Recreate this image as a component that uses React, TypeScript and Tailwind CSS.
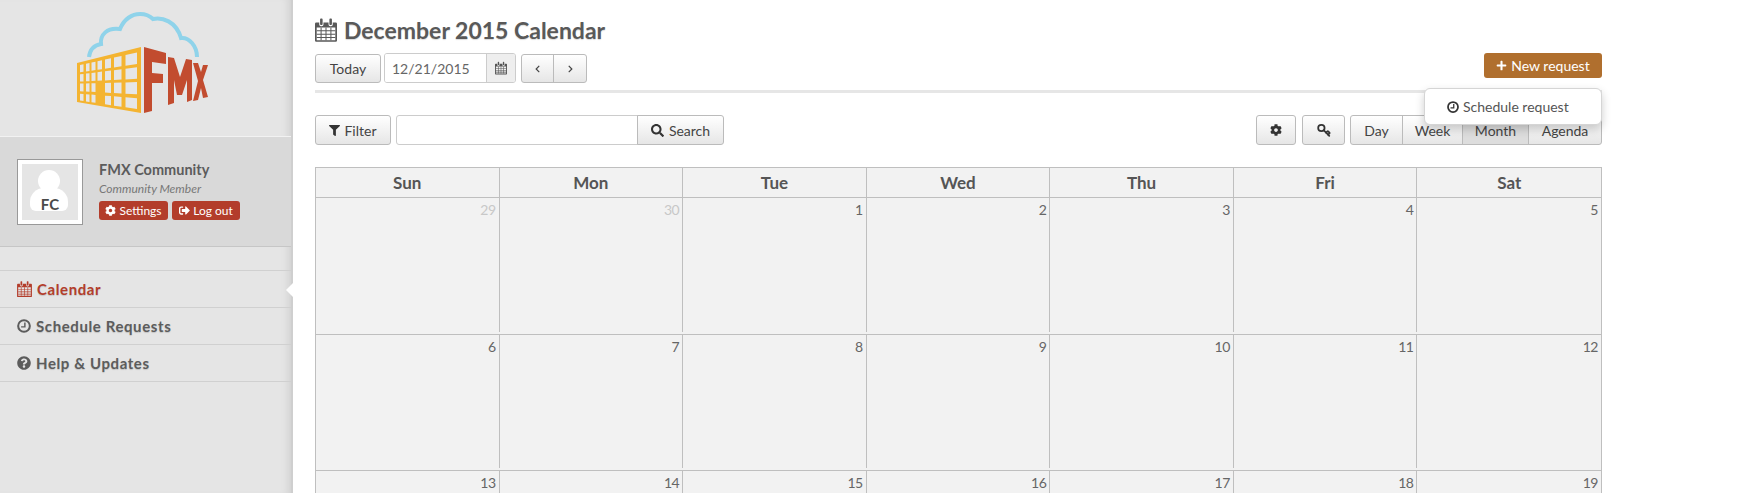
import React from 'react';
import { Key } from 'lucide-react';
import { FaCog, FaFilter, FaPlus, FaQuestionCircle, FaSearch, FaSignOutAlt, FaChevronLeft, FaChevronRight } from 'react-icons/fa';

const CalendarIcon: React.FC<{ className?: string }> = ({ className }) => (
  <svg viewBox="0 0 26 28" className={className} fill="currentColor">
    <path d="M1.5 5H5V7.5a2 2 0 0 0 2 2h1a2 2 0 0 0 2-2V5h6v2.5a2 2 0 0 0 2 2h1a2 2 0 0 0 2-2V5h3.5A1.5 1.5 0 0 1 26 6.500v20a1.500 1.500 0 0 1-1.500 1.500h-23A1.500 1.500 0 0 1 0 26.500v-20A1.500 1.500 0 0 1 1.500 5zM2 11v15h22V11H2z" fillRule="evenodd" />
    <path d="M6 1.500a1 1 0 0 1 1-1h1a1 1 0 0 1 1 1V7a1 1 0 0 1-1 1H7a1 1 0 0 1-1-1zM17 1.500a1 1 0 0 1 1-1h1a1 1 0 0 1 1 1V7a1 1 0 0 1-1 1h-1a1 1 0 0 1-1-1z" />
    <path d="M6.600 11h1.200v15H6.600zM12.400 11h1.200v15h-1.200zM18.200 11h1.200v15h-1.200zM2 14.300h22v1.200H2zM2 18.300h22v1.200H2zM2 22.300h22v1.200H2z" />
  </svg>
);

const ClockIcon: React.FC<{ className?: string }> = ({ className }) => (
  <svg viewBox="0 0 24 24" className={className} fill="none" stroke="currentColor">
    <circle cx="12" cy="12" r="10" strokeWidth="3.5" />
    <path d="M13.500 6v7.500H7" strokeWidth="2.500" />
  </svg>
);

// logo building windows, columns get wider towards the corner
const WIN_COLS = [[10, 13.5], [16, 19.5], [21.5, 25.5], [27.5, 32], [35, 41], [44, 51.5], [55.5, 67]];
const WIN_ROWS = [[0.07, 0.25], [0.3, 0.48], [0.53, 0.72], [0.78, 0.95]];
const topY = (x: number) => 58 - ((x - 7) / 64) * 16;
const botY = (x: number) => 97 + ((x - 7) / 64) * 11;
const yAt = (x: number, f: number) => topY(x) + (botY(x) - topY(x)) * f;

const Logo: React.FC = () => (
  <svg viewBox="0 0 150 115" className="w-[150px] h-[115px]">
    <path d="M19 52 C20 44 25 40 31 39 C30 30 37 22 50 24 C54 14 62 9 70 9 C76 9 80 11 83 14 C92 12 106 16 111 33 C119 32 127 41 127 52" fill="none" stroke="#8fd3ea" strokeWidth="4" />
    <path d="M7 58 L71 42 L71 108 L7 97Z" fill="#f4b431" />
    <g fill="#e6e6e6">
      {WIN_COLS.map(([a, b], c) =>
        WIN_ROWS.map(([f, g], r) =>
          c === 3 && r > 1 ? null : (
            <polygon key={`${c}-${r}`} points={`${a},${yAt(a, f)} ${b},${yAt(b, f)} ${b},${yAt(b, g)} ${a},${yAt(a, g)}`} />
          ),
        ),
      )}
    </g>
    <g fill="#c24c2f">
      <path d="M74 42 L96 48 L96 59 L82 57 L82 68 L93 69 L93 78 L82 78 L82 106 L74 108Z" />
      <path d="M98 52 L104 53 L110 72 L116 54 L122 55 L122 95 L117 97 L117 75 L112 90 L107 90 L104 75 L104 98 L98 100Z" />
      <path d="M123 58 L128 58 L131 67 L133 60 L138 60 L133 75 L138 92 L133 93 L131 83 L128 95 L123 96 L128 76Z" />
    </g>
  </svg>
);

const BTN = 'bg-gradient-to-b from-white to-[#e6e6e6] border border-[#bbbbbb] text-[#444] text-[14px]';

const DAYS = ['Sun', 'Mon', 'Tue', 'Wed', 'Thu', 'Fri', 'Sat'];
const WEEKS = [
  { h: 'h-[137px]', cells: [29, 30, 1, 2, 3, 4, 5] },
  { h: 'h-[136px]', cells: [6, 7, 8, 9, 10, 11, 12] },
  { h: 'h-[136px]', cells: [13, 14, 15, 16, 17, 18, 19] },
];

const NavItem: React.FC<{ icon: React.ReactNode; label: string; active?: boolean }> = ({ icon, label, active }) => (
  <div className={`relative h-[37px] flex items-center pl-[17px] gap-[5px] border-b border-[#d0d0d0] font-bold text-[15px] tracking-[0.6px] [text-shadow:0_1px_1px_rgba(0,0,0,0.15)] ${active ? 'text-[#b33d2b]' : 'text-[#5c5c5c]'}`}>
    {icon}
    {label}
    {active && <div className="absolute right-[-2px] top-[12px] w-0 h-0 border-y-[7px] border-y-transparent border-r-[7px] border-r-white" />}
  </div>
);

export default function App() {
  return (
    <div className="flex h-[493px] overflow-hidden bg-white font-['Lato','Liberation_Sans',sans-serif]">
      {/* Sidebar */}
      <aside className="w-[293px] shrink-0 bg-[#e5e5e5] border-r-[2px] border-[#cfcfcf] shadow-[inset_-8px_0_8px_-6px_rgba(0,0,0,0.1)] relative">
        <div className="h-[137px] flex justify-center pt-[5px] pr-[2px] border-b border-[#f2f2f2]">
          <Logo />
        </div>
        <div className="h-[110px] bg-[#d9d9d9] flex items-start pl-[18px] pt-[23px] border-b border-[#c6c6c6]">
          <div className="relative w-[64px] h-[64px] bg-[#e5e5e5] border-[4px] border-white outline-1 outline-[#999] overflow-hidden">
            <div className="absolute left-[16px] top-[6px] w-[22px] h-[22px] rounded-full bg-white" />
            <div className="absolute left-[8px] top-[24px] w-[38px] h-[23px] rounded-t-[14px] rounded-b-[6px] bg-white" />
            <div className="absolute inset-x-0 top-[29px] text-center text-[15px] font-bold text-[#4a4a4a]">FC</div>
          </div>
          <div className="ml-[17px] -mt-[1px]">
            <div className="text-[14.5px] font-bold text-[#5c5c5c] leading-[22px]">FMX Community</div>
            <div className="text-[12px] italic text-[#777] leading-[15px]">Community Member</div>
            <div className="flex gap-[4px] mt-[5px]">
              <div className="w-[69px] h-[19px] flex items-center justify-center gap-[3px] rounded-[3px] bg-[#b33d2b] text-white text-[12px]">
                <FaCog className="w-[11px] h-[11px]" /> Settings
              </div>
              <div className="w-[68px] h-[19px] flex items-center justify-center gap-[3px] rounded-[3px] bg-[#b33d2b] text-white text-[12px]">
                <FaSignOutAlt className="w-[11px] h-[11px]" /> Log out
              </div>
            </div>
          </div>
        </div>
        <div className="mt-[23px] border-t border-[#d0d0d0]">
          <NavItem active icon={<CalendarIcon className="w-[15px] h-[16px]" />} label="Calendar" />
          <NavItem icon={<ClockIcon className="w-[14px] h-[14px]" />} label="Schedule Requests" />
          <NavItem icon={<FaQuestionCircle className="w-[14px] h-[14px]" />} label="Help & Updates" />
        </div>
      </aside>

      {/* Main */}
      <main className="relative w-[1287px] ml-[22px] pt-[16px]">
        <h1 className="flex items-center gap-[7px] h-[28px] text-[23px] font-bold text-[#595959] leading-none [text-shadow:0_1px_1px_rgba(0,0,0,0.15)]">
          <CalendarIcon className="w-[22px] h-[24px]" />
          December 2015 Calendar
        </h1>
        <div className="flex items-start justify-between mt-[10px] h-[31px]">
          <div className="flex items-center h-[29px]">
            <div className={`${BTN} w-[66px] h-[29px] rounded-[3px] flex items-center justify-center`}>Today</div>
            <div className="flex ml-[3px] h-[30px] -mt-[1px] border border-[#cccccc] rounded-[3px] overflow-hidden">
              <div className="w-[101px] pl-[7px] flex items-center text-[14px] text-[#666] bg-white">12/21/2015</div>
              <div className="w-[29px] bg-[#eeeeee] border-l border-[#cccccc] flex items-center justify-center text-[#555]">
                <CalendarIcon className="w-[12px] h-[14px]" />
              </div>
            </div>
            <div className={`${BTN} flex ml-[5px] h-[29px] rounded-[3px] overflow-hidden`}>
              <div className="w-[32px] flex items-center justify-center border-r border-[#bbbbbb]"><FaChevronLeft className="w-[7px] h-[8px]" /></div>
              <div className="w-[32px] flex items-center justify-center"><FaChevronRight className="w-[7px] h-[8px]" /></div>
            </div>
          </div>
          <div className="-mt-[1px] w-[118px] h-[25px] rounded-[3px] bg-[#b06f2e] text-white text-[14px] flex items-center justify-center gap-[4px]">
            <FaPlus className="w-[11px] h-[11px]" /> New request
          </div>
        </div>
        <div className="h-[3px] bg-[#e6e6e6] mt-[5px]" />

        <div className="flex items-center justify-between mt-[22px]">
          <div className="flex items-center">
            <div className={`${BTN} w-[76px] h-[30px] rounded-[3px] flex items-center justify-center gap-[4px]`}>
              <FaFilter className="w-[11px] h-[11px] text-[#333]" /> Filter
            </div>
            <div className="ml-[5px] w-[242px] h-[30px] bg-white border border-[#cccccc] rounded-l-[3px]" />
            <div className={`${BTN} w-[87px] h-[30px] -ml-px rounded-r-[3px] flex items-center justify-center gap-[5px]`}>
              <FaSearch className="w-[13px] h-[13px] text-[#333]" /> Search
            </div>
          </div>
          <div className="flex items-center">
            <div className={`${BTN} w-[40px] h-[30px] rounded-[3px] flex items-center justify-center`}><FaCog className="w-[12px] h-[12px] text-[#333]" /></div>
            <div className={`${BTN} w-[43px] h-[30px] ml-[6px] rounded-[3px] flex items-center justify-center`}><Key strokeWidth={3} className="w-[14px] h-[14px] text-[#333] -scale-y-100" /></div>
            <div className={`${BTN} ml-[5px] w-[252px] h-[30px] rounded-[3px] flex overflow-hidden`}>
              <div className="w-[52px] flex items-center justify-center border-r border-[#bbbbbb]">Day</div>
              <div className="w-[60px] flex items-center justify-center border-r border-[#bbbbbb]">Week</div>
              <div className="w-[66px] flex items-center justify-center border-r border-[#bbbbbb] bg-[#dddddd]">Month</div>
              <div className="flex-1 flex items-center justify-center">Agenda</div>
            </div>
          </div>
        </div>

        {/* Schedule dropdown */}
        <div className="absolute left-[1109px] top-[88px] w-[178px] h-[37px] bg-white border border-[#d5d5d5] rounded-[6px] shadow-[0_4px_10px_rgba(0,0,0,0.2)] flex items-center pl-[22px] gap-[4px] text-[14px] text-[#555]">
          <ClockIcon className="w-[12px] h-[12px] text-[#333]" /> Schedule request
        </div>

        {/* Month grid */}
        <div className="mt-[22px] border-l border-r border-t border-[#bfbfbf] bg-[#f2f2f2]">
          <div className="grid grid-cols-7 h-[30px] border-b border-[#bfbfbf]">
            {DAYS.map((d, i) => (
              <div key={d} className={`flex items-center justify-center text-[17px] font-bold text-[#555] ${i < 6 ? 'border-r border-[#bfbfbf]' : ''}`}>{d}</div>
            ))}
          </div>
          {WEEKS.map((w, wi) => (
            <div key={wi} className={`${w.h} pb-[2px] border-b border-[#bfbfbf]`}>
              <div className="grid grid-cols-7 h-full">
                {w.cells.map((n, i) => (
                  <div key={n} className={`pt-[3px] pr-[3px] text-right text-[14px] leading-[18px] tracking-[-0.5px] ${n > 28 && wi === 0 ? 'text-[#c8c8c8]' : 'text-[#666]'} ${i < 6 ? 'border-r border-[#bfbfbf]' : ''}`}>{n}</div>
                ))}
              </div>
            </div>
          ))}
        </div>
      </main>
    </div>
  );
}
